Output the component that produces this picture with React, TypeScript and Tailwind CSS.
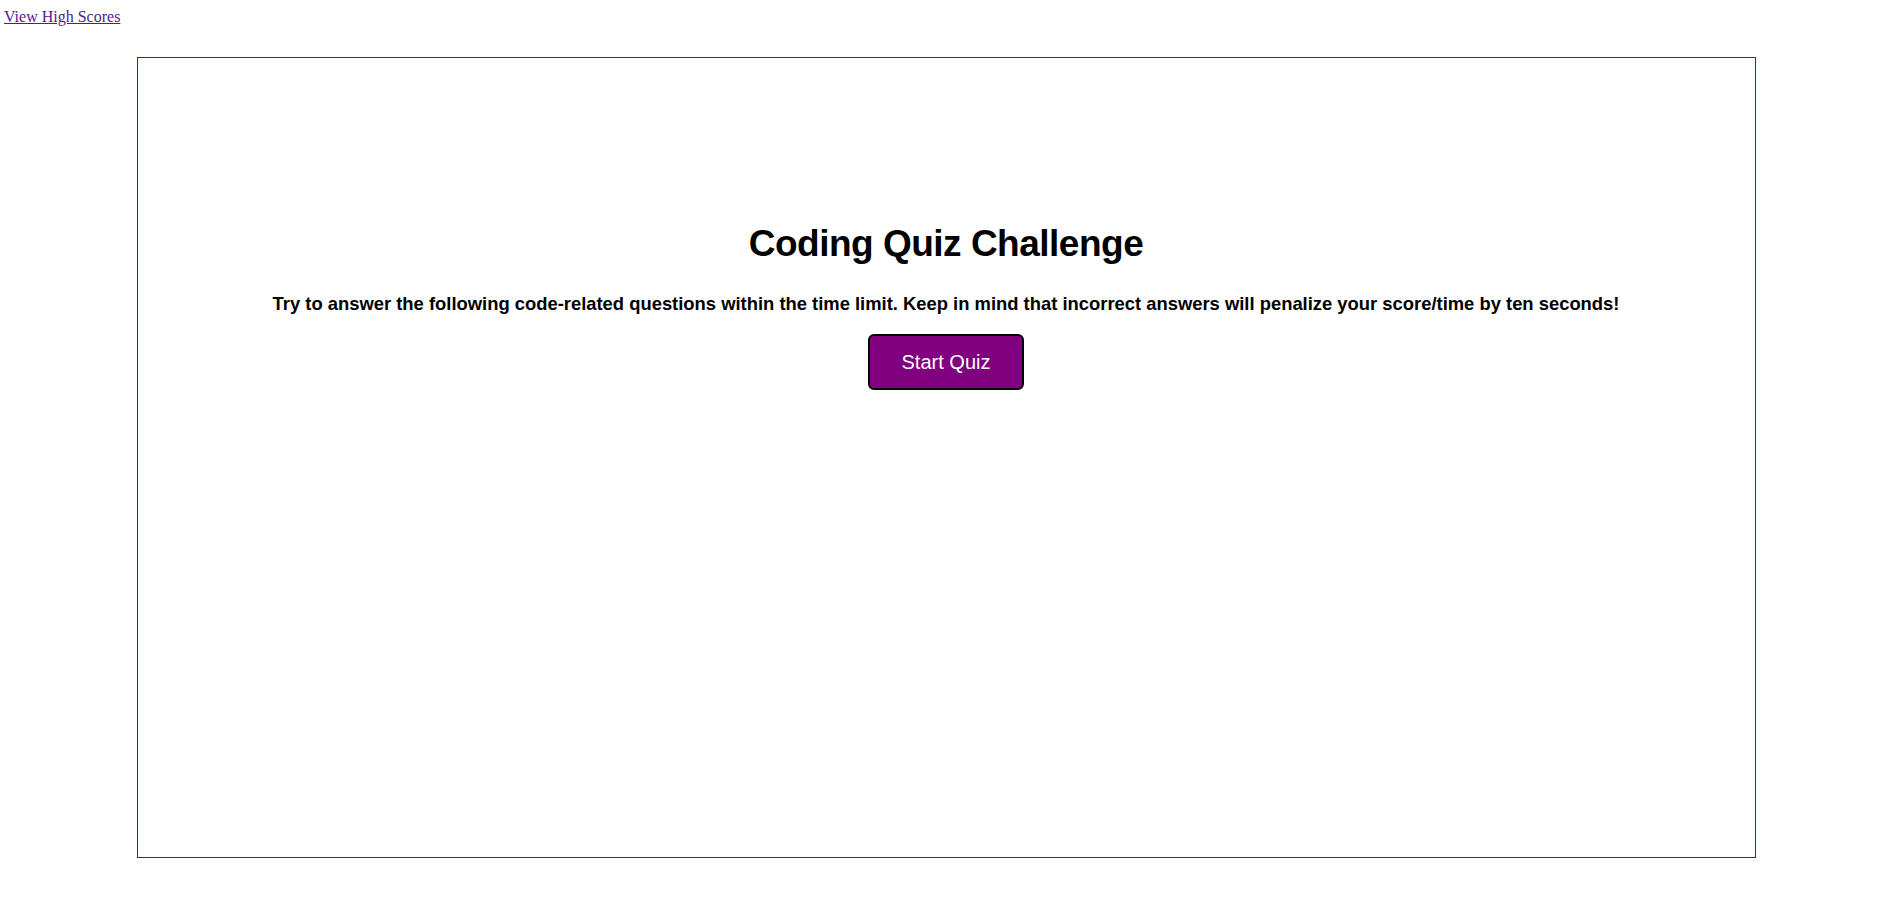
import React from "react";

export default function App() {
  return (
    <div className="min-h-screen bg-white px-1 pt-[4px] pb-10">
      {/* Header link */}
      <header className="h-[18px]">
        <a
          href="#"
          className="font-['Liberation_Serif',serif] text-[16px] leading-[18px] text-[#551a8b] underline"
        >
          View High Scores
        </a>
      </header>

      {/* Quiz card */}
      <main className="mx-auto mt-[35px] flex h-[801px] w-[1619px] flex-col items-center border border-[#800080] pt-[164px]">
        <h1 className="font-['Liberation_Sans',Arial,sans-serif] text-[37px] font-bold leading-[44px] tracking-[-0.5px] text-black">
          Coding Quiz Challenge
        </h1>
        <p className="mt-[27px] font-['Liberation_Sans',Arial,sans-serif] text-[18.4px] font-bold leading-[22px] text-black">
          Try to answer the following code-related questions within the time limit. Keep in mind that incorrect answers will penalize your score/time by ten seconds!
        </p>
        <button className="mt-[19px] h-[56px] w-[156px] rounded-[6px] border-2 border-black bg-[#800080] font-['Liberation_Sans',Arial,sans-serif] text-[20px] text-white">
          Start Quiz
        </button>
      </main>
    </div>
  );
}
